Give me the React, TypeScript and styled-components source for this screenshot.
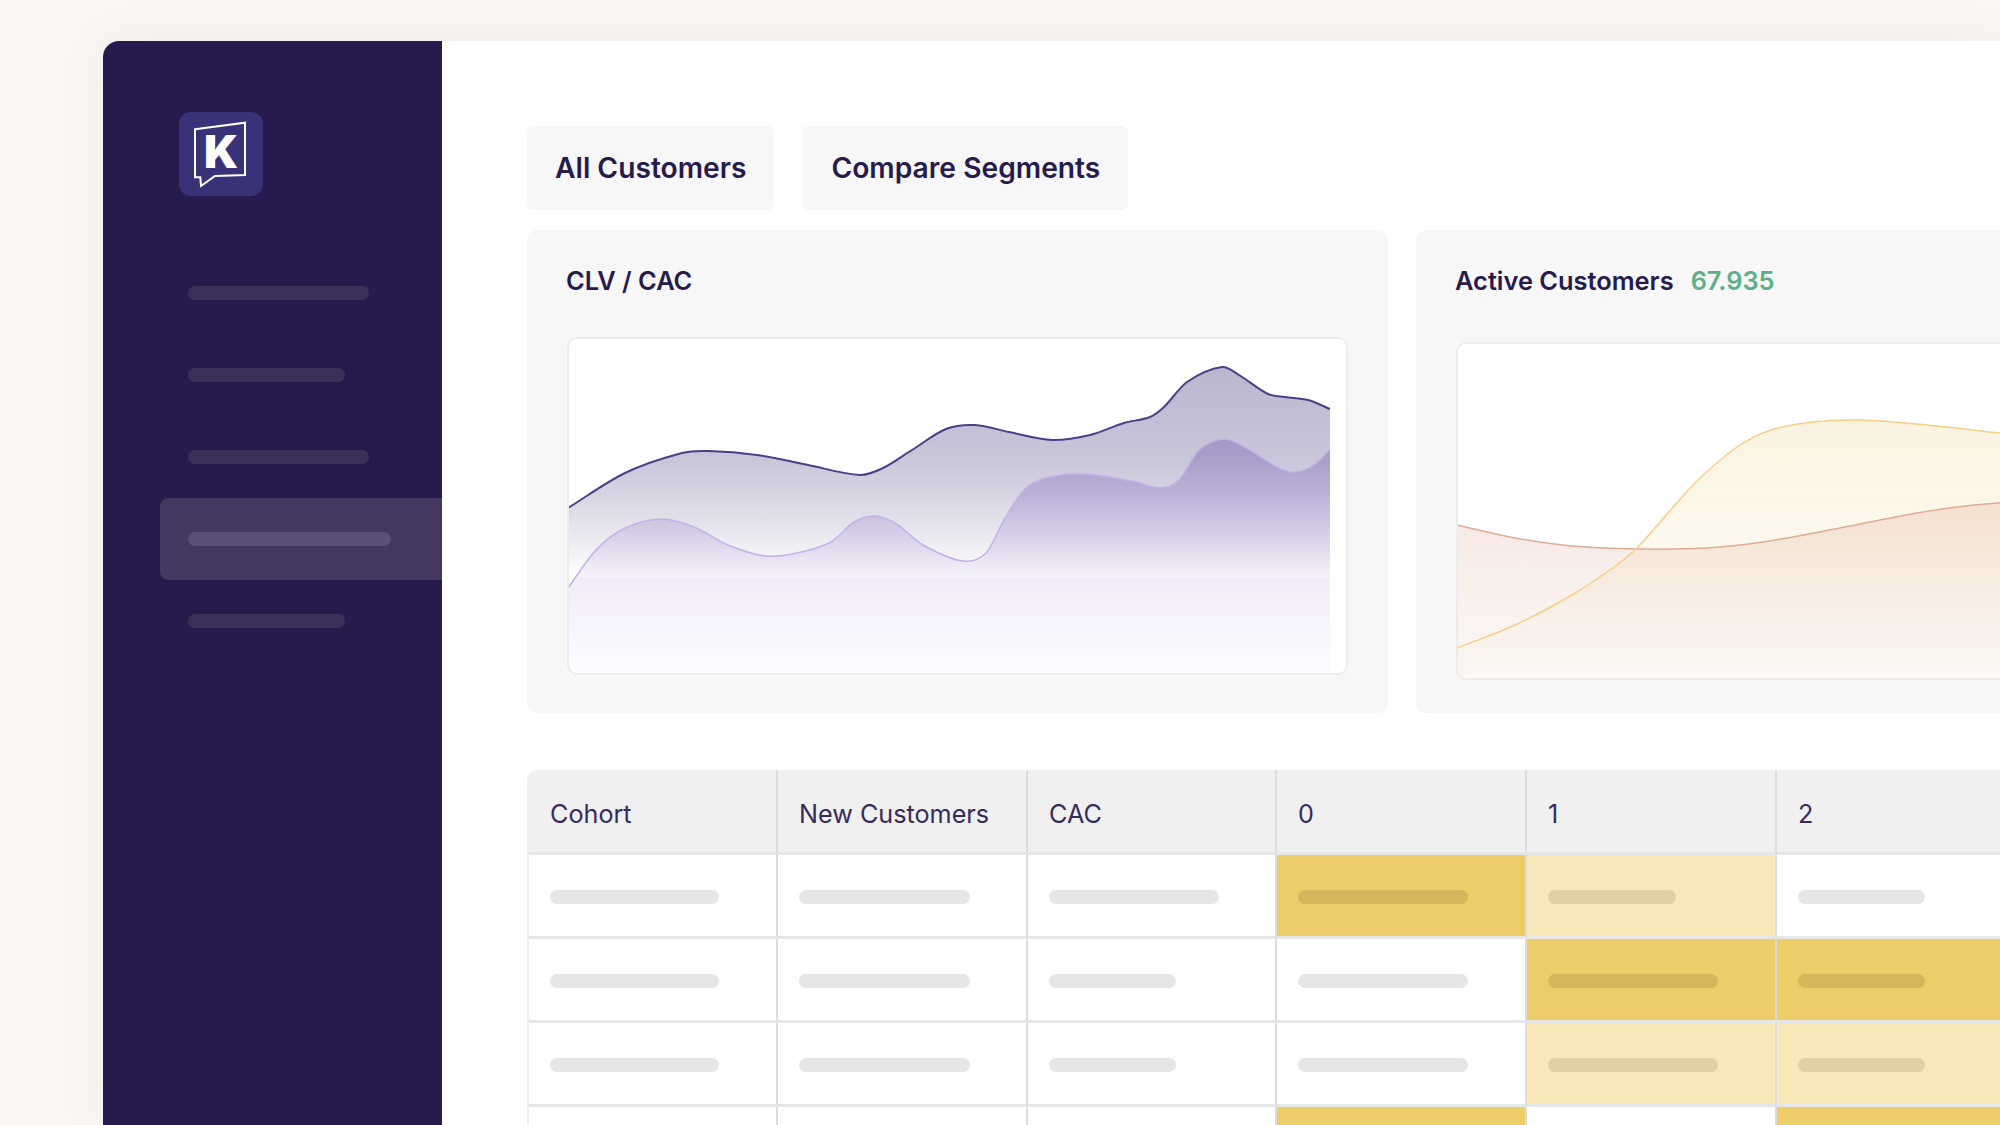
import React from 'react';
import styled, { createGlobalStyle } from 'styled-components';

type Point = [number, number];
type Tone = 'plain' | 'strong' | 'light';

const GlobalStyle = createGlobalStyle`
  html, body {
    margin: 0;
    height: 100%;
    overflow: hidden;
    background: #faf6f3;
    font-family: Inter, "Liberation Sans", sans-serif;
  }
  * {
    box-sizing: border-box;
  }
`;

const Page = styled.div`
  width: 2000px;
  height: 1125px;
  padding: 41px 0 0 103px;
  overflow: hidden;
`;

const Window = styled.div`
  display: flex;
  width: 1897px;
  height: 1084px;
  overflow: hidden;
  background: #fff;
  border-radius: 16px 0 0 0;
  box-shadow: 0 0 50px rgba(130, 90, 70, 0.06);
`;

const Sidebar = styled.aside`
  flex: none;
  width: 339px;
  padding-top: 71px;
  background: #271a4d;
`;

const LogoBox = styled.div`
  width: 84px;
  height: 84px;
  margin: 0 0 56px 76px;
  background: #3a3278;
  border-radius: 12px;

  svg {
    display: block;
  }
`;

const LogoLetter = styled.text`
  font-family: Inter, "Liberation Sans", sans-serif;
  font-size: 45px;
  font-weight: 900;
  fill: #fff;
`;

const NavRow = styled.div<{ $active?: boolean }>`
  display: flex;
  align-items: center;
  height: 82px;
  margin-left: 57px;
  padding-left: 28px;
  border-radius: 8px 0 0 8px;
  background: ${(props) => (props.$active ? '#443760' : 'transparent')};
`;

const NavBar = styled.div<{ $width: number; $active?: boolean }>`
  width: ${(props) => props.$width}px;
  height: 14px;
  border-radius: 7px;
  background: ${(props) => (props.$active ? '#5c5075' : '#3d3058')};
`;

const Main = styled.main`
  flex: 1;
  min-width: 0;
  padding: 85px 0 0 85px;
`;

const Tabs = styled.div`
  display: flex;
  gap: 29px;
  margin-bottom: 20px;
`;

const Tab = styled.div`
  display: flex;
  align-items: center;
  height: 84px;
  padding: 0 28px;
  border-radius: 6px;
  background: #f7f7f7;
  color: #271a4d;
  font-size: 28.2px;
  font-weight: 600;
`;

const Cards = styled.div`
  display: flex;
  gap: 28px;
  margin-bottom: 57px;
`;

const Card = styled.section`
  flex: none;
  width: 861px;
  height: 483px;
  padding: 35px 40px 0;
  border-radius: 10px;
  background: #f7f7f7;
`;

const CardTitle = styled.h2`
  display: flex;
  gap: 17px;
  margin: 0 0 0 -1px;
  color: #271a4d;
  font-size: 25.4px;
  font-weight: 600;
  line-height: 32px;
`;

const Count = styled.span`
  color: #5bb08a;
`;

const ChartFrame = styled.div<{ $top: number }>`
  width: 781px;
  height: 338px;
  margin-top: ${(props) => props.$top}px;
  overflow: hidden;
  border: 2px solid #ececec;
  border-radius: 10px;
  background: #fff;

  svg {
    display: block;
  }
`;

const Table = styled.div`
  display: grid;
  grid-template-columns: 249px 250px 249px repeat(4, 250px);
  width: 1748px;
  border-left: 2px solid #efefef;
  border-radius: 10px 0 0 0;
  overflow: hidden;
`;

const HeadCell = styled.div`
  display: flex;
  align-items: center;
  height: 85px;
  padding: 5px 0 0 21px;
  border-right: 2px solid #dcdcdc;
  border-bottom: 3px solid #e6e6e6;
  background: #f0f0f0;
  color: #372b5c;
  font-size: 25.2px;
`;

const toneColors = {
  plain: { cell: '#fff', bar: '#e6e6e6' },
  strong: { cell: '#edcd68', bar: '#d6b65a' },
  light: { cell: '#f8e7b8', bar: '#e0d0a2' },
};

const Cell = styled.div<{ $tone: Tone }>`
  display: flex;
  align-items: center;
  height: 84px;
  padding: 2px 0 0 21px;
  border-right: 2px solid #dcdcdc;
  border-bottom: 3px solid #e6e6e6;
  background: ${(props) => toneColors[props.$tone].cell};
`;

const CellBar = styled.div<{ $tone: Tone; $width: number }>`
  width: ${(props) => props.$width}px;
  height: 14px;
  border-radius: 7px;
  background: ${(props) => toneColors[props.$tone].bar};
`;

// smooth line through the points, slope at each point taken from its neighbours
const smooth = (pts: Point[]) => {
  const slope = (i: number) => {
    const a = pts[Math.max(i - 1, 0)];
    const b = pts[Math.min(i + 1, pts.length - 1)];
    return (b[1] - a[1]) / (b[0] - a[0]);
  };
  let d = `M${pts[0][0]} ${pts[0][1]}`;
  for (let i = 0; i < pts.length - 1; i++) {
    const [x1, y1] = pts[i];
    const [x2, y2] = pts[i + 1];
    const dx = (x2 - x1) / 3;
    d += ` C${x1 + dx} ${y1 + slope(i) * dx} ${x2 - dx} ${y2 - slope(i + 1) * dx} ${x2} ${y2}`;
  }
  return d;
};

const area = (pts: Point[], bottom: number) =>
  `${smooth(pts)} L${pts[pts.length - 1][0]} ${bottom} L${pts[0][0]} ${bottom} Z`;

const clvLine: Point[] = [
  [568, 508], [625, 473], [682, 453], [708, 451], [757, 455], [808, 465], [860, 475], [883, 468],
  [912, 450], [946, 429], [975, 425], [1009, 432], [1052, 440], [1090, 435], [1124, 423], [1150, 417],
  [1164, 407], [1187, 382], [1222, 367], [1239, 375], [1268, 394], [1285, 397], [1308, 400], [1330, 409],
];

const cacLine: Point[] = [
  [568, 588], [596, 550], [625, 528], [662, 519], [694, 527], [728, 545], [765, 556], [797, 553],
  [831, 542], [854, 522], [874, 516], [895, 523], [923, 545], [963, 561], [986, 553], [1004, 520],
  [1027, 487], [1061, 475], [1095, 475], [1136, 482], [1161, 488], [1179, 480], [1199, 450], [1225, 439],
  [1250, 450], [1279, 468], [1296, 472], [1314, 465], [1330, 449],
];

const activeLine: Point[] = [
  [1457, 648], [1515, 625], [1572, 595], [1614, 567], [1637, 548], [1668, 513], [1698, 480], [1737, 447],
  [1771, 430], [1813, 422], [1859, 420], [1905, 423], [1955, 428], [2000, 433], [2240, 450],
];

const churnLine: Point[] = [
  [1457, 525], [1515, 538], [1572, 546], [1637, 549], [1706, 548], [1763, 542], [1840, 528], [1917, 513],
  [1974, 505], [2010, 502], [2240, 480],
];

const navBars = [181, 157, 181, 203, 157];
const headers = ['Cohort', 'New Customers', 'CAC', '0', '1', '2', ''];

const rows: { tone: Tone; width: number }[][] = [
  [
    { tone: 'plain', width: 169 }, { tone: 'plain', width: 171 }, { tone: 'plain', width: 170 },
    { tone: 'strong', width: 170 }, { tone: 'light', width: 128 }, { tone: 'plain', width: 127 },
  ],
  [
    { tone: 'plain', width: 169 }, { tone: 'plain', width: 171 }, { tone: 'plain', width: 127 },
    { tone: 'plain', width: 170 }, { tone: 'strong', width: 170 }, { tone: 'strong', width: 127 },
  ],
  [
    { tone: 'plain', width: 169 }, { tone: 'plain', width: 171 }, { tone: 'plain', width: 127 },
    { tone: 'plain', width: 170 }, { tone: 'light', width: 170 }, { tone: 'light', width: 127 },
  ],
  [
    { tone: 'plain', width: 169 }, { tone: 'plain', width: 171 }, { tone: 'plain', width: 127 },
    { tone: 'strong', width: 170 }, { tone: 'plain', width: 127 }, { tone: 'strong', width: 127 },
  ],
];

export default function App() {
  return (
    <Page>
      <GlobalStyle />
      <Window>
        <Sidebar>
          <LogoBox>
            <svg width="84" height="84" viewBox="0 0 84 84">
              <path
                d="M16 17.3 L66 10.7 V63 L36 64 L22 74 L21.3 65.3 H16 Z"
                fill="none"
                stroke="#fff"
                strokeWidth="2"
              />
              <LogoLetter x="25" y="56">K</LogoLetter>
            </svg>
          </LogoBox>
          {navBars.map((width, index) => (
            <NavRow key={index} $active={index === 3}>
              <NavBar $width={width} $active={index === 3} />
            </NavRow>
          ))}
        </Sidebar>

        <Main>
          <Tabs>
            <Tab>All Customers</Tab>
            <Tab>Compare Segments</Tab>
          </Tabs>

          <Cards>
            <Card>
              <CardTitle>CLV / CAC</CardTitle>
              <ChartFrame $top={40}>
                <svg width="777" height="334" viewBox="569 339 777 334">
                  <defs>
                    <linearGradient id="cacFill" gradientUnits="userSpaceOnUse" x1="0" y1="439" x2="0" y2="672">
                      <stop offset="0" stopColor="#cfc3e8" />
                      <stop offset="0.3" stopColor="#dcd0f0" />
                      <stop offset="0.59" stopColor="#f2ebfa" />
                      <stop offset="1" stopColor="#fdfcff" />
                    </linearGradient>
                    <linearGradient id="clvFill" gradientUnits="userSpaceOnUse" x1="0" y1="367" x2="0" y2="577">
                      <stop offset="0" stopColor="#3d3478" stopOpacity="0.36" />
                      <stop offset="0.45" stopColor="#4b4383" stopOpacity="0.3" />
                      <stop offset="1" stopColor="#ffffff" stopOpacity="0.35" />
                    </linearGradient>
                  </defs>
                  <path d={area(cacLine, 673)} fill="url(#cacFill)" />
                  <path d={area(clvLine, 577)} fill="url(#clvFill)" />
                  <path d={smooth(cacLine)} fill="none" stroke="#c4b1e8" strokeWidth="1.5" />
                  <path d={smooth(clvLine)} fill="none" stroke="#4a4088" strokeWidth="2" />
                </svg>
              </ChartFrame>
            </Card>

            <Card>
              <CardTitle>
                Active Customers <Count>67.935</Count>
              </CardTitle>
              <ChartFrame $top={45}>
                <svg width="777" height="334" viewBox="1458 344 777 334">
                  <defs>
                    <linearGradient id="activeFill" gradientUnits="userSpaceOnUse" x1="0" y1="420" x2="0" y2="678">
                      <stop offset="0" stopColor="#fbf3e0" />
                      <stop offset="0.5" stopColor="#fdf9ee" />
                      <stop offset="1" stopColor="#fffdfb" />
                    </linearGradient>
                    <linearGradient id="churnFill" gradientUnits="userSpaceOnUse" x1="0" y1="503" x2="0" y2="678">
                      <stop offset="0" stopColor="#e2a98e" stopOpacity="0.28" />
                      <stop offset="1" stopColor="#f0e6df" stopOpacity="0.25" />
                    </linearGradient>
                  </defs>
                  <path d={area(activeLine, 678)} fill="url(#activeFill)" />
                  <path d={area(churnLine, 678)} fill="url(#churnFill)" />
                  <path d={smooth(churnLine)} fill="none" stroke="#dfab97" strokeWidth="1.5" />
                  <path d={smooth(activeLine)} fill="none" stroke="#f6cf85" strokeWidth="1.5" />
                </svg>
              </ChartFrame>
            </Card>
          </Cards>

          <Table>
            {headers.map((label, index) => (
              <HeadCell key={index}>{label}</HeadCell>
            ))}
            {rows.map((row, rowIndex) => (
              <React.Fragment key={rowIndex}>
                {row.map((cell, cellIndex) => (
                  <Cell key={cellIndex} $tone={cell.tone}>
                    <CellBar $tone={cell.tone} $width={cell.width} />
                  </Cell>
                ))}
                <Cell $tone="plain" />
              </React.Fragment>
            ))}
          </Table>
        </Main>
      </Window>
    </Page>
  );
}
